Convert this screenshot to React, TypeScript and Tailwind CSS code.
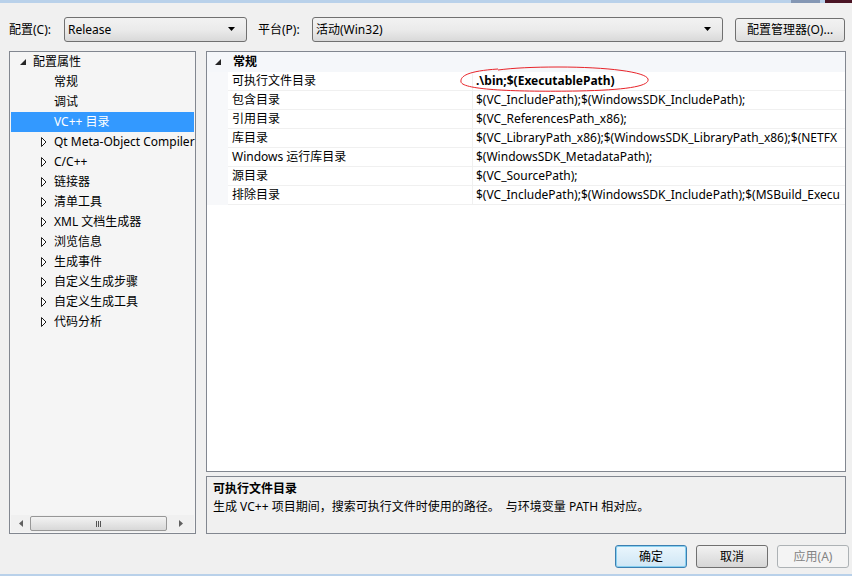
import React from 'react'

const font = { fontFamily: '"Noto Sans", "Noto Sans CJK SC", sans-serif' }

function Combo({ value, className }: { value: string; className: string }) {
  return (
    <div
      className={`h-[25px] flex items-center justify-between rounded-[3px] border border-[#707070] bg-gradient-to-b from-[#f2f2f2] via-[#ebebeb] to-[#d9d9d9] pl-[3px] pr-[10px] text-[12px] text-black ${className}`}
    >
      <span>{value}</span>
      <svg width="8" height="5" viewBox="0 0 8 5">
        <path d="M0 0 H7 L3.5 4 Z" fill="#000" />
      </svg>
    </div>
  )
}

function WinButton({ label, className }: { label: string; className: string }) {
  return (
    <div
      className={`h-[23px] flex items-center justify-center rounded-[3px] border text-[12px] ${className}`}
    >
      {label}
    </div>
  )
}

const Expanded = () => (
  <svg width="7" height="7" viewBox="0 0 7 7" className="shrink-0">
    <path d="M6 0 V6 H0 Z" fill="#262626" />
  </svg>
)

const Collapsed = () => (
  <svg width="6" height="10" viewBox="0 0 6 10" className="shrink-0">
    <path d="M0.5 0.5 L5 5 L0.5 9.5 Z" fill="#fff" stroke="#1e1e1e" />
  </svg>
)

export default function App() {
  const children = ['常规', '调试', 'VC++ 目录']
  const collapsed = [
    'Qt Meta-Object Compiler',
    'C/C++',
    '链接器',
    '清单工具',
    'XML 文档生成器',
    '浏览信息',
    '生成事件',
    '自定义生成步骤',
    '自定义生成工具',
    '代码分析',
  ]
  const rows = [
    ['可执行文件目录', '.\\bin;$(ExecutablePath)'],
    ['包含目录', '$(VC_IncludePath);$(WindowsSDK_IncludePath);'],
    ['引用目录', '$(VC_ReferencesPath_x86);'],
    ['库目录', '$(VC_LibraryPath_x86);$(WindowsSDK_LibraryPath_x86);$(NETFX'],
    ['Windows 运行库目录', '$(WindowsSDK_MetadataPath);'],
    ['源目录', '$(VC_SourcePath);'],
    ['排除目录', '$(VC_IncludePath);$(WindowsSDK_IncludePath);$(MSBuild_Execu'],
  ]

  return (
    <div className="w-[852px] h-[576px] bg-[#f0f0f0] flex flex-col overflow-hidden text-[12px] text-black" style={font}>
      {/* window frame strip */}
      <div className="h-[3px] bg-[#b9d1ea] flex justify-end shrink-0">
        <div className="w-[29px] bg-[#8497b4] mr-[5px]" />
        <div className="w-[27px] bg-[#4a1525]" />
      </div>

      {/* top bar */}
      <div className="h-[48px] flex items-center pt-[5px] pl-[9px] shrink-0">
        <span className="w-[55px]">配置(C):</span>
        <Combo value="Release" className="w-[183px]" />
        <span className="ml-[11px] w-[54px]">平台(P):</span>
        <Combo value="活动(Win32)" className="w-[411px]" />
        <div className="ml-[12px] h-[24px] w-[110px] flex items-center justify-center rounded-[3px] border border-[#707070] bg-gradient-to-b from-[#f2f2f2] via-[#ebebeb] to-[#dddddd]">
          配置管理器(O)...
        </div>
      </div>

      {/* main */}
      <div className="flex pl-[9px] h-[483px] shrink-0">
        {/* tree */}
        <div className="w-[187px] h-[483px] border border-[#828790] bg-[#f5f5f5] flex flex-col">
          <div className="flex-1 pt-[0px] overflow-hidden whitespace-nowrap">
            <div className="h-[20px] flex items-center pl-[10px] gap-[6px]">
              <Expanded />
              <span>配置属性</span>
            </div>
            {children.map((c) => (
              <div
                key={c}
                className={`h-[20px] flex items-center pl-[43px] mx-[1px] ${c === 'VC++ 目录' ? 'bg-[#3399ff] text-white' : ''}`}
              >
                {c}
              </div>
            ))}
            {collapsed.map((c) => (
              <div key={c} className="h-[20px] flex items-center pl-[31px] gap-[7px]">
                <Collapsed />
                <span>{c}</span>
              </div>
            ))}
          </div>
          {/* horizontal scrollbar */}
          <div className="h-[17px] mx-[1px] mb-[1px] flex items-center bg-[#f0f0f0]">
            <div className="w-[19px] flex justify-center">
              <svg width="4" height="7" viewBox="0 0 4 7">
                <path d="M4 0 V7 L0 3.5 Z" fill="#606060" />
              </svg>
            </div>
            <div className="h-[15px] w-[137px] rounded-[2px] border border-[#979797] bg-gradient-to-b from-[#f3f3f3] to-[#d8d8d8] flex items-center justify-center">
              <div className="flex gap-[1px]">
                <div className="w-[1px] h-[6px] bg-[#555]" />
                <div className="w-[1px] h-[6px] bg-[#555]" />
                <div className="w-[1px] h-[6px] bg-[#555]" />
              </div>
            </div>
            <div className="flex-1 flex justify-center">
              <svg width="4" height="7" viewBox="0 0 4 7">
                <path d="M0 0 V7 L4 3.5 Z" fill="#606060" />
              </svg>
            </div>
          </div>
        </div>

        {/* right side */}
        <div className="ml-[10px] w-[640px] flex flex-col">
          <div className="relative h-[421px] border border-[#828790] bg-white overflow-hidden">
            <div className="h-[20px] flex items-center bg-[#f5f7fa] pl-[8px] gap-[11px] font-bold">
              <Expanded />
              <span>常规</span>
            </div>
            {rows.map(([n, v], i) => (
              <div key={n} className="h-[19px] flex">
                <div className="w-[21px] shrink-0 bg-[#f7f8fa]" />
                <div className="flex-1 min-w-0 flex border-b border-[#f0f0f0]">
                  <div className="w-[245px] shrink-0 pl-[4px] flex items-center border-r border-[#f0f0f0] whitespace-nowrap">{n}</div>
                  <div className={`flex-1 min-w-0 pl-[3px] flex items-center whitespace-nowrap overflow-hidden ${i === 0 ? 'font-bold' : ''}`}>{v}</div>
                </div>
              </div>
            ))}
            <svg
              className="absolute left-[251px] top-[14px]"
              width="194"
              height="28"
              viewBox="0 0 194 28"
            >
              <path
                d="M40 3 C 10 5, 2 10, 3 16 C 5 24, 60 26, 120 25 C 170 24, 192 20, 190 13 C 188 6, 150 1, 100 1 C 75 1, 55 2, 40 4"
                fill="none"
                stroke="#e8242a"
                strokeWidth="1"
              />
            </svg>
          </div>
          <div className="mt-[4px] h-[58px] border border-[#828790] bg-[#f0f0f0] px-[6px] pt-[3px] leading-[18px]">
            <div className="font-bold">可执行文件目录</div>
            <div className="whitespace-pre">生成 VC++ 项目期间，搜索可执行文件时使用的路径。  与环境变量 PATH 相对应。</div>
          </div>
        </div>
      </div>

      {/* buttons */}
      <div className="flex justify-end gap-[9px] pr-[3px] pt-[11px]">
        <WinButton label="确定" className="w-[72px] border-[#3c7fb1] shadow-[inset_0_0_0_1px_#88d0f0] bg-gradient-to-b from-[#eaf6fd] to-[#cfe6f5]" />
        <WinButton label="取消" className="w-[72px] border-[#707070] bg-gradient-to-b from-[#f2f2f2] to-[#d6d6d6]" />
        <WinButton label="应用(A)" className="w-[72px] border-[#adb2b5] bg-[#f4f4f4] text-[#838383]" />
      </div>
      <div className="mt-auto h-[2px] bg-[#b9d1ea]" />
    </div>
  )
}
